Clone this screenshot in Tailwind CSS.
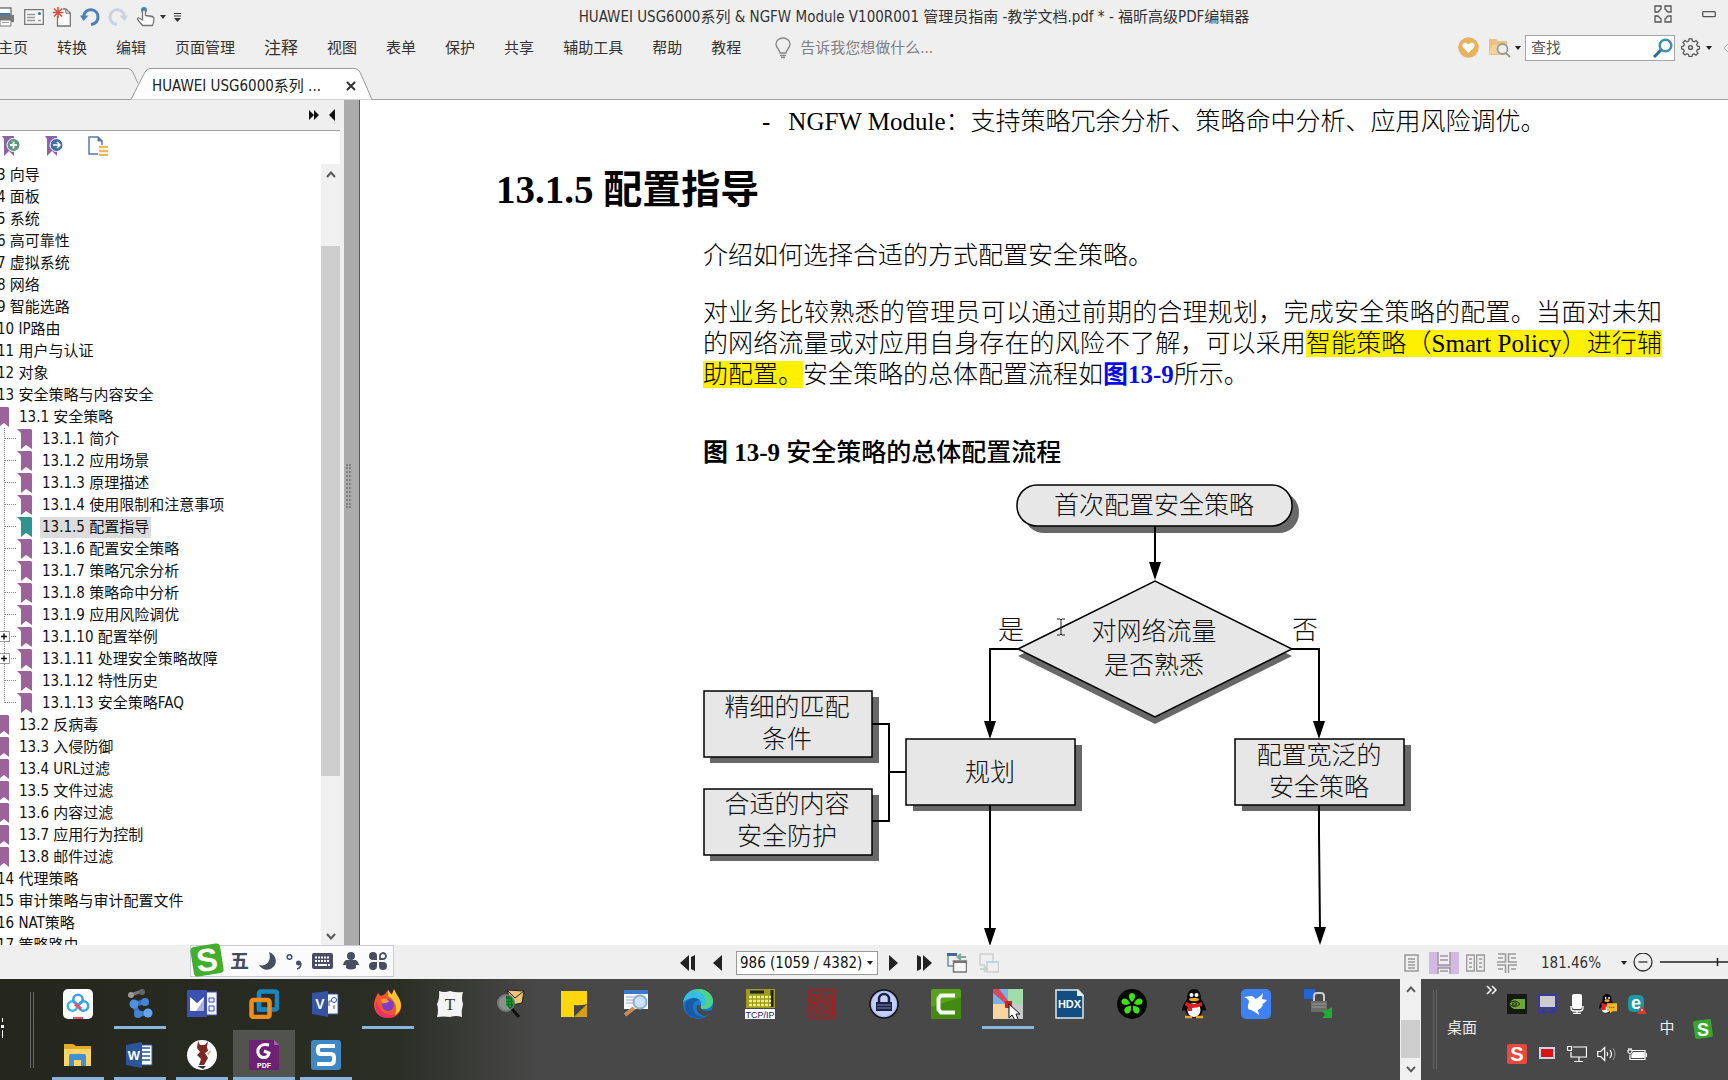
<!DOCTYPE html>
<html lang="zh-CN">
  <head>
    <meta charset="UTF-8" />
    <meta name="viewport" content="width=device-width, initial-scale=1.0" />
    <title>福昕高级PDF编辑器</title>
    <script src="https://cdn.jsdelivr.net/npm/@tailwindcss/browser@4"></script>
  </head>
  <body class="h-screen overflow-hidden flex flex-col bg-[#efefef] text-[15px] leading-[22px] text-[#333] font-['DejaVu_Sans_Condensed','Noto_Sans_CJK_SC',sans-serif]">
    <!-- title bar -->
    <header class="shrink-0">
      <div class="h-[34px] flex items-center">
        <div class="w-[180px] flex items-center gap-2">
          <button aria-label="打印" class="w-4"><svg class="w-4 h-5" viewBox="0 0 16 20" fill="none"><path d="M0 1h11v7H0" fill="#fff" stroke="#777" stroke-width="1.4"/><path d="M0 6h10v3H0z" fill="#3f78a8"/><path d="M0 8h14v7H0z" fill="#777"/><path d="M0 13h11v6H0z" fill="#fff" stroke="#777"/><path d="M2 15.500h7" stroke="#999"/></svg></button>
          <button aria-label="邮件"><svg class="w-5 h-5" viewBox="0 0 20 20" fill="none" stroke="#777" stroke-width="1.300"><path d="M.7 2.700h18.600v14.600H.7z" fill="#f7f7f7"/><path d="M3 7.500h8M3 10.500h8M3 13.500h8M14 13.500h3" stroke="#999"/><circle cx="15.500" cy="6.500" r="1.500" fill="#3f6fa8" stroke="none"/></svg></button>
          <button aria-label="新建"><svg class="w-5 h-5" viewBox="0 0 20 20" fill="none"><path d="M5.500 9v10h12.800V6l-4.500-4h-3" fill="#fafafa" stroke="#777" stroke-width="1.300"/><path d="M13.800 2v4.200h4.500" stroke="#777"/><path d="M6 0v11M.8 5.500h10.500M2 1.500l8 8M10 1.500l-8 8" stroke="#d8503c" stroke-width="1.500"/></svg></button>
          <button aria-label="撤销"><svg class="w-5 h-5" viewBox="0 0 20 20" fill="none"><path d="M3.500 10C4 4.500 8 2.300 11.500 2.700c4 .5 6.500 3.500 6.500 7.300 0 4-2.800 6.800-7 7.500" stroke="#4a82b6" stroke-width="3"/><path d="M0 8.500h8.500L3.500 14z" fill="#4a82b6"/></svg></button>
          <button aria-label="重做"><svg class="w-5 h-5" viewBox="0 0 20 20" fill="none"><path d="M16.500 10C16 4.500 12 2.300 8.500 2.700 4.500 3.200 2 6.200 2 10c0 4 2.800 6.800 7 7.500" stroke="#c9d3df" stroke-width="3"/><path d="M20 8.500h-8.500l5 5.500z" fill="#c9d3df"/></svg></button>
          <button aria-label="手型工具" class="flex items-center gap-1"><svg class="w-5 h-5" viewBox="0 0 20 20" fill="none"><circle cx="8" cy="3" r="3" fill="#4a7fb0"/><path d="M6.500 4v9L3 11c-1.500-.5-2 1-1 2l4.500 5.500h10c1.500-2.500 1.500-5 1.300-7.500-.1-1.500-1.300-1.700-8.300-2.500V4c0-1.500-3-1.500-3 0z" fill="#fafafa" stroke="#777" stroke-width="1.300"/></svg><svg class="w-[6px] h-2" viewBox="0 0 6 8"><path d="M0 2h6L3 6z" fill="#333"/></svg></button>
          <button aria-label="自定义"><svg class="w-[7px] h-3" viewBox="0 0 7 12"><path d="M0 2.500h7M0 5h7" stroke="#333"/><path d="M0 7h7l-3.500 4z" fill="#333"/></svg></button>
        </div>
        <h1 class="flex-1 text-center whitespace-nowrap">HUAWEI USG6000系列 &amp; NGFW Module V100R001 管理员指南 -教学文档.pdf * - 福昕高级PDF编辑器</h1>
        <div class="w-[80px] flex items-center gap-[30px] pl-[6px] pb-[6px]">
          <button aria-label="全屏"><svg class="w-[18px] h-[18px]" viewBox="0 0 18 18" fill="none" stroke="#555" stroke-width="1.300"><path d="M1 1h6v3L4 7H1zM11 1h6v6h-3l-3-3zM1 11h3l3 3v3H1zM14 11h3v6h-6v-3z"/></svg></button>
          <button aria-label="最小化"><svg class="w-[14px] h-[18px]" viewBox="0 0 14 18"><rect x=".7" y="6.700" width="12.600" height="5" rx="1" fill="none" stroke="#555" stroke-width="1.300"/></svg></button>
        </div>
      </div>

      <!-- menu -->
      <div class="h-[34px] flex items-center pb-[7px]">
        <nav class="flex items-center gap-[29px] -ml-[2px] whitespace-nowrap">
          <a href="#">主页</a>
          <a href="#">转换</a>
          <a href="#">编辑</a>
          <a href="#">页面管理</a>
          <a href="#" class="text-[17px]">注释</a>
          <a href="#">视图</a>
          <a href="#">表单</a>
          <a href="#">保护</a>
          <a href="#">共享</a>
          <a href="#">辅助工具</a>
          <a href="#">帮助</a>
          <a href="#">教程</a>
        </nav>
        <label class="ml-[34px] flex items-center gap-[9px]">
          <svg class="w-4 h-[22px]" viewBox="0 0 16 22" fill="none" stroke="#888" stroke-width="1.400"><path d="M5 16c0-3-4-5-4-9a7 6 0 0 1 14 0c0 4-4 6-4 9zM5 18.500h6M6 20.500h4"/></svg>
          <input type="text" placeholder="告诉我您想做什么..." class="w-[180px] bg-transparent outline-none placeholder:text-[#808080]" />
        </label>
        <div class="ml-auto flex items-center shrink-0">
          <button aria-label="收藏" class="mr-[10px]"><svg class="w-[21px] h-[21px]" viewBox="0 0 21 21"><circle cx="10.500" cy="10.500" r="10.300" fill="#e6b160"/><path d="M10.500 16L5 10.500C3 7.500 6.500 3.500 10.500 7.500 14.500 3.500 18 7.500 16 10.500z" fill="#fff"/></svg></button>
          <button aria-label="搜索文件夹" class="mr-[4px] flex items-center gap-[4px]"><svg class="w-[22px] h-[21px]" viewBox="0 0 22 21"><path d="M0 2h7l2 2h9v14H0z" fill="#ecc083"/><path d="M3 8h15l-2 9H0z" fill="#f3d2a0"/><circle cx="13.500" cy="12" r="5" fill="#eee" stroke="#999" stroke-width="1.800"/><path d="M17 16l4 4" stroke="#999" stroke-width="2"/></svg><svg class="w-[6px] h-2" viewBox="0 0 6 8"><path d="M0 2h6L3 6z" fill="#222"/></svg></button>
          <label class="w-[150px] h-[26px] bg-white border border-[#a5a5a5] flex items-center pl-[5px] pr-[1px]">
            <input type="text" placeholder="查找" aria-label="查找" class="flex-1 min-w-0 outline-none placeholder:text-[#555]" />
            <svg class="w-5 h-5" viewBox="0 0 20 20" fill="none"><path d="M1 19l7-7" stroke="#31678e" stroke-width="3"/><circle cx="12.500" cy="7.500" r="5.800" stroke="#3f8fb0" stroke-width="2.500"/></svg>
          </label>
          <button aria-label="设置" class="ml-[6px] flex items-center gap-[6px]"><svg class="w-[19px] h-[19px]" viewBox="0 0 20 20" fill="none" stroke="#555"><path stroke-width="1.300" d="M8.500 1h3l.5 2.300 1.800.8 2-1.400 2 2-1.300 2 .8 1.900 2.200.4v2.500l-2.200.7-.8 1.800 1.400 2-2.100 2-2-1.300-1.800.7-.5 2.300h-3L8 17.300l-1.800-.8-2 1.300-2.100-2 1.400-2-.8-1.900L.5 11.500V9l2.300-.6.7-1.800-1.300-2 2-2 2 1.300L8 3.200z"/><circle cx="10" cy="10" r="2" stroke-width="1.500"/></svg><svg class="w-[6px] h-2" viewBox="0 0 6 8"><path d="M0 2h6L3 6z" fill="#222"/></svg></button>
          <svg class="w-[4px] h-3 ml-3" viewBox="0 0 4 12" fill="none"><path d="M4 2L0 6l4 4" stroke="#bbb"/></svg>
        </div>
      </div>

      <!-- document tabs -->
      <div class="h-8 relative border-b border-[#a0a0a0]">
        <svg class="absolute left-0 top-0 w-[376px] h-8" viewBox="0 0 376 32" stroke="#999"><path d="M-2.500.5H128q3 0 5 4l5 11" fill="none"/><path d="M131 31.500L145 4q2-3.500 5-3.500h205q3 0 5 3.500l12 27.500" fill="#fff"/></svg>
        <div class="relative flex items-center h-8 pt-1 pl-[152px]">
          <span class="w-[193px] text-[#222] whitespace-nowrap">HUAWEI USG6000系列 ...</span>
          <button aria-label="关闭标签"><svg class="w-3 h-3" viewBox="0 0 12 12"><path d="M2 2l8 8M10 2l-8 8" stroke="#333" stroke-width="2"/></svg></button>
        </div>
      </div>
    </header>

    <main class="flex-1 min-h-0 flex">
      <!-- bookmarks panel -->
      <aside class="w-[344px] shrink-0 flex flex-col pr-1">
        <div class="h-[31px] shrink-0 border-b border-[#a0a0a0] flex items-center justify-end gap-[10px] pr-[5px]">
          <button aria-label="展开"><svg class="w-[10px] h-[10px]" viewBox="0 0 10 10"><path d="M0 0l5 5-5 5zM5 0l5 5-5 5z" fill="#111"/></svg></button>
          <button aria-label="收起"><svg class="w-[6px] h-3" viewBox="0 0 6 12"><path d="M6 0v12L0 6z" fill="#111"/></svg></button>
        </div>
        <div class="h-[33px] shrink-0 bg-white flex items-center pl-[2px] gap-[25px] pb-1">
          <button aria-label="添加书签"><svg class="w-[18px] h-5" viewBox="0 0 18 20"><path d="M0 0h12v20l-5-5-5 5V3z" fill="#8f62a8"/><circle cx="11.500" cy="9" r="6.500" fill="#5f9780" stroke="#fff"/><path d="M11.500 5.500v7M8 9h7" stroke="#fff" stroke-width="1.800"/></svg></button>
          <button aria-label="转到书签"><svg class="w-[18px] h-5" viewBox="0 0 18 20"><path d="M0 0h12v20l-5-5-5 5V3z" fill="#8f62a8"/><circle cx="11.500" cy="9" r="6.500" fill="#4470a8" stroke="#fff"/><path d="M8 9h7M12 6l3 3-3 3" fill="none" stroke="#fff" stroke-width="1.500"/></svg></button>
          <button aria-label="书签选项"><svg class="w-5 h-5" viewBox="0 0 20 20" fill="none"><path d="M1 1h9l4 4v13H1z" fill="#fff" stroke="#5578a8" stroke-width="1.500"/><path d="M10 1v4h4" fill="#5578a8" stroke="#5578a8"/><path d="M10 9h10v11H10z" fill="#fff"/><path d="M11 11h9M11 15h9M11 19h9" stroke="#efb75c" stroke-width="2.500"/></svg></button>
        </div>
        <div class="flex-1 min-h-0 flex bg-white">
          <ul id="bookmarks" class="flex-1 min-w-0 overflow-hidden text-[#111] whitespace-nowrap"></ul>
          <div class="w-[19px] bg-[#f0f0f0] flex flex-col items-center justify-between">
            <svg class="w-[10px] h-[22px]" viewBox="0 0 10 22"><path d="M1 13l4-4.500L9 13" fill="none" stroke="#555" stroke-width="2"/></svg>
            <div class="w-full grow-530 basis-0 mt-[60px] mb-[147px] bg-[#cdcdcd]"></div>
            <svg class="w-[10px] h-[22px]" viewBox="0 0 10 22"><path d="M1 11l4 4.500L9 11" fill="none" stroke="#555" stroke-width="2"/></svg>
          </div>
        </div>
      </aside>
      <div class="w-4 shrink-0 bg-[#ababab] border-r border-[#555] pl-[2px]">
        <div class="mt-[364px] w-[5px] h-[44px] border-x-2 border-dotted border-[#808080]"></div>
      </div>

      <!-- page -->
      <article class="flex-1 min-w-0 overflow-hidden bg-white text-black text-[25px] leading-[31px] pl-[136px] font-['Liberation_Serif','Noto_Sans_CJK_SC',serif]">
        <p class="pl-[266px] pt-[6px] font-light flex gap-[18px] whitespace-nowrap"><span>-</span><span>NGFW Module：支持策略冗余分析、策略命中分析、应用风险调优。</span></p>
        <h2 class="mt-[28px] text-[39px] leading-[50px] font-bold">13.1.5 配置指导</h2>
        <div class="pl-[207px] mr-4">
          <p class="mt-[25px] font-light">介绍如何选择合适的方式配置安全策略。</p>
          <p class="mt-[26px] max-w-[959px] text-justify font-light">对业务比较熟悉的管理员可以通过前期的合理规划，完成安全策略的配置。当面对未知的网络流量或对应用自身存在的风险不了解，可以采用<mark class="bg-[#fff000]">智能策略（Smart Policy）进行辅助配置。</mark>安全策略的总体配置流程如<a href="#fig-13-9" class="text-[#0808e8] font-bold">图13-9</a>所示。</p>
          <h3 id="fig-13-9" class="mt-[47px] font-medium"><b>图 13-9</b> 安全策略的总体配置流程</h3>
        </div>
        <!-- configuration flow chart -->
        <svg class="ml-[204px] mt-[11px] w-[720px] h-[467px]" viewBox="0 0 720 467" text-anchor="middle">
          <g fill="#686868">
            <rect x="324" y="13" width="275" height="41" rx="20" />
            <path d="M318 177l137-68 137 68-137 68z" />
            <rect x="213" y="266" width="169" height="66" />
            <rect x="542" y="266" width="169" height="66" />
            <rect x="10" y="218" width="169" height="66" />
            <rect x="10" y="316" width="169" height="66" />
          </g>
          <g fill="none" stroke="#000" stroke-width="2">
            <path d="M455 46v40M318 170h-28v76M592 170h27v76M290 325v126M619 325v30l1 96" />
            <path d="M172 245h17v97h-17M189 293h17" />
          </g>
          <path d="M449 83h12l-6 18zM284 242h12l-6 18zM613 242h12l-6 18zM284 449h12l-6 18zM614 448h12l-6 18z" />
          <g fill="#e7e7e7" stroke="#000" stroke-width="1.500">
            <rect x="317" y="6" width="275" height="41" rx="20" />
            <path d="M318 170l137-68 137 68-137 68z" />
            <rect x="206" y="260" width="169" height="66" />
            <rect x="535" y="260" width="169" height="66" />
            <rect x="4" y="212" width="168" height="66" />
            <rect x="4" y="310" width="168" height="66" />
          </g>
          <g class="font-light" fill="#111">
            <text x="454" y="35">首次配置安全策略</text>
            <text x="454" y="161">对网络流量</text>
            <text x="454" y="195">是否熟悉</text>
            <text x="311" y="160" font-size="26">是</text>
            <text x="605" y="160" font-size="26">否</text>
            <text x="87" y="237">精细的匹配</text>
            <text x="87" y="269">条件</text>
            <text x="87" y="334">合适的内容</text>
            <text x="87" y="366">安全防护</text>
            <text x="290" y="302">规划</text>
            <text x="619" y="285">配置宽泛的</text>
            <text x="619" y="317">安全策略</text>
          </g>
          <path d="M357 140h3l1 1 1-1h3M357 156h3l1-1 1 1h3M361 141v14" fill="none" stroke="#222" />
        </svg>
      </article>
    </main>

    <!-- status bar -->
    <footer class="h-[34px] shrink-0 relative flex items-center">
      <div class="absolute left-[190px] top-0 h-8 w-[204px] flex items-center gap-[10px] pl-[39px] bg-[#fbfbfd] border border-[#c9cbdc] text-[#454860]">
        <svg class="absolute -left-[2px] -top-[4px] w-9 h-9" viewBox="0 0 36 36"><rect x="3" y="3" width="30" height="30" rx="4" fill="#43ae2c" transform="rotate(-9 18 18)"/><text x="18" y="29" text-anchor="middle" font-family="Liberation Sans" font-weight="700" font-size="32" fill="#fff" transform="rotate(-6 18 18)">S</text></svg>
        <span class="text-[19px] font-bold">五</span>
        <svg class="w-[17px] h-[18px]" viewBox="0 0 17 18"><path d="M10 0c8 3 9 12 3 16-4 3-10 2-13-3 7 2 13-4 10-13z" fill="#4a4d60"/></svg>
        <svg class="w-4 h-[18px]" viewBox="0 0 16 18"><circle cx="3.500" cy="5" r="2.300" fill="none" stroke="#4a4d60" stroke-width="1.500"/><circle cx="12.500" cy="11" r="2.500" fill="#4a4d60"/><path d="M15 11q0 5-4 6" fill="none" stroke="#4a4d60" stroke-width="1.500"/></svg>
        <svg class="w-[21px] h-[16px]" viewBox="0 0 21 16"><rect width="21" height="16" rx="2" fill="#4a4d60"/><path d="M3 4.500h15M3 8h15" stroke="#fff" stroke-width="2" stroke-dasharray="2 1"/><path d="M3 12h2M6 12h9M16 12h2" stroke="#fff" stroke-width="2"/></svg>
        <svg class="w-[16px] h-[18px]" viewBox="0 0 16 18" fill="#4a4d60"><circle cx="8" cy="4" r="4"/><path d="M3 8h10q3 2 3 5h-3v3q-5 3-10 0v-3H0q0-3 3-5z"/></svg>
        <svg class="w-[18px] h-[18px]" viewBox="0 0 18 18" fill="#4a4d60"><path d="M8 8H4a4 4 0 1 1 4-4zM8 10v4a4 4 0 1 1-4-4zM10 10h4a4 4 0 1 1-4 4z"/><path d="M11 7V4.500a3 3 0 1 1 3 2.500z" fill="none" stroke="#4a4d60" stroke-width="1.800"/></svg>
      </div>
      <div class="flex items-center ml-[680px] pt-px text-[#111] shrink-0">
        <button aria-label="第一页"><svg class="w-[15px] h-4" viewBox="0 0 15 16"><path d="M9 0v16L0 8zM15 0v16l-4-2V2z" fill="#222"/></svg></button>
        <button aria-label="上一页" class="ml-[18px]"><svg class="w-[9px] h-4" viewBox="0 0 9 16"><path d="M9 0v16L0 8z" fill="#222"/></svg></button>
        <div class="relative ml-[14px]">
          <select aria-label="页码" class="appearance-none block w-[142px] h-6 bg-white border border-[#999] pl-[3px] text-[15px] leading-[22px]">
            <option>986 (1059 / 4382)</option>
          </select>
          <svg class="absolute right-[5px] top-2 w-[6px] h-2 pointer-events-none" viewBox="0 0 6 8"><path d="M0 2h6L3 6z" fill="#222"/></svg>
        </div>
        <button aria-label="下一页" class="ml-[11px]"><svg class="w-[9px] h-4" viewBox="0 0 9 16"><path d="M0 0v16l9-8z" fill="#222"/></svg></button>
        <button aria-label="最后一页" class="ml-[19px]"><svg class="w-[15px] h-4" viewBox="0 0 15 16"><path d="M6 0v16l9-8zM0 0v16l4-2V2z" fill="#222"/></svg></button>
        <button aria-label="上一视图" class="ml-[15px]"><svg class="w-5 h-5" viewBox="0 0 20 20" fill="none" stroke-width="1.500"><path d="M9 1H1v12h5" stroke="#7790a5"/><path d="M0 1.500h10" stroke="#3e6b94" stroke-width="3"/><path d="M6.500 8h13v11h-13z" stroke="#777" fill="#f8f8f8"/><path d="M6 9h14" stroke="#777" stroke-width="2"/><path d="M19 4h-7M14 1l-3.500 3L14 7" stroke="#7fa89a" stroke-width="2"/></svg></button>
        <button aria-label="下一视图" class="ml-[12px]"><svg class="w-5 h-5" viewBox="0 0 20 20" fill="none" stroke="#cfcfcf" stroke-width="1.500"><path d="M1 1h13v7M1 1v11h5M8 9h11.500v10H8z"/><path d="M7 9h13" stroke="#bcd6dd" stroke-width="2"/><path d="M1 16h7M5 13l3 3-3 3" stroke="#bcd6d0" stroke-width="2"/></svg></button>
      </div>
      <div class="ml-auto flex items-center pt-px shrink-0 text-[#333]">
        <button aria-label="单页" class="mr-[10px]"><svg class="w-[15px] h-[18px]" viewBox="0 0 15 18" fill="none" stroke="#999" stroke-width="1.500"><path d="M1 1h13v16H1zM4 5h7M4 8h7M4 11h7M4 14h7"/></svg></button>
        <button aria-label="连续" class="w-[30px] h-[22px] bg-[#d3b8e4] flex justify-center items-center"><svg class="w-4 h-[22px]" viewBox="0 0 16 22" stroke="#999" stroke-width="1.500"><path d="M2 0v13h12V0M2 22v-6h12v6" fill="#f3ecf7"/><path d="M4 4h8M4 8h8M4 19h8"/></svg></button>
        <button aria-label="双页" class="ml-[7px]"><svg class="w-[19px] h-[18px]" viewBox="0 0 19 18" fill="none" stroke="#999" stroke-width="1.300"><path d="M.7 1h7.600v16H.7zM10.700 1h7.600v16h-7.600zM3 5h3M3 9h3M3 13h3M13 5h3M13 9h3M13 13h3"/></svg></button>
        <button aria-label="双页连续" class="ml-[12px]"><svg class="w-5 h-5" viewBox="0 0 20 20" fill="none" stroke="#999" stroke-width="1.500"><path d="M1 1h7.500v8H0M19 1h-7.500v8H20M0 12h8.500v8M20 12h-8.500v8M1 5h5M14 5h5M1 16h5M14 16h5"/></svg></button>
        <span class="ml-[24px] w-[80px]">181.46%</span>
        <svg class="w-[6px] h-2" viewBox="0 0 6 8"><path d="M0 2h6L3 6z" fill="#222"/></svg>
        <button aria-label="缩小" class="ml-[6px]"><svg class="w-5 h-5" viewBox="0 0 20 20" fill="none" stroke="#333" stroke-width="1.300"><circle cx="10" cy="9" r="9"/><path d="M5.500 9h9"/></svg></button>
        <svg class="w-[68px] h-3 ml-[7px]" viewBox="0 0 68 12"><path d="M0 5h68M57.500 1v8" stroke="#222" stroke-width="1.500"/></svg>
      </div>
    </footer>

    <!-- windows taskbar -->
    <div class="h-[101px] shrink-0 flex bg-[#484848] bg-linear-to-r from-[#25271f] from-[2%] via-[#2b2e25] via-[23%] to-[#484848] to-[31%] text-[#eee]">
      <div class="w-[47px] shrink-0 relative">
        <svg class="w-[47px] h-[101px]" viewBox="0 0 47 101"><path d="M2.500 39v4M2.500 51v8" stroke="#fff"/><path d="M1 46h3v3H1z" fill="#fff"/><path d="M30.500 13v76M33.500 13v76" stroke="#666"/></svg>
      </div>
      <div class="flex-1 min-w-0 grid grid-cols-[repeat(21,62px)] grid-rows-[51px_50px]">
        <button aria-label="百度网盘" class="flex justify-center pt-[10px]"><svg class="w-[30px] h-[30px]" viewBox="0 0 30 30" fill="none"><rect width="30" height="30" rx="5" fill="#fff"/><circle cx="9.500" cy="17" r="4.700" stroke="#3fb6e8" stroke-width="2.600"/><circle cx="20.500" cy="17" r="4.700" stroke="#35a6e6" stroke-width="2.600"/><circle cx="15" cy="10.500" r="4.700" stroke="#3f9fe8" stroke-width="2.600"/><path d="M12 15l6 5" stroke="#e8506a" stroke-width="3"/><path d="M10 29h10" stroke="#e8506a" stroke-width="2"/></svg></button>
        <button aria-label="拓扑" class="flex justify-center pt-[10px] relative after:absolute after:bottom-px after:inset-x-[5px] after:h-[3px] after:bg-[#86b6dd]"><svg class="w-[30px] h-[30px]" viewBox="0 0 30 30"><path d="M6 6l11-4" stroke="#777" stroke-width="3"/><circle cx="6" cy="6" r="3" fill="#999"/><circle cx="17" cy="3" r="3" fill="#666"/><path d="M20 13L9 15l4 10 11-1" fill="none" stroke="#3c74c4" stroke-width="5"/><circle cx="20" cy="13" r="4" fill="#4583d6"/><circle cx="9" cy="15" r="4.500" fill="#4f90e0"/><circle cx="13" cy="25" r="4" fill="#4583d6"/><circle cx="23" cy="24" r="4.500" fill="#66a5ee"/></svg></button>
        <button aria-label="MindMaster" class="flex justify-center pt-[10px]"><svg class="w-[30px] h-[30px]" viewBox="0 0 30 30"><path d="M17 3h13v23H17z" fill="#f2f2fa" stroke="#4150a8"/><path d="M22 9h5v4h-5zM22 17h5v5h-5z" fill="none" stroke="#4150a8"/><path d="M0 1h20v27H0z" fill="#3d50b2"/><path d="M3 8l7 6 7-6v14H3z" fill="#fff"/><path d="M9 22l8-12v12z" fill="#a9b1dc"/></svg></button>
        <button aria-label="VMware" class="flex justify-center pt-[10px]"><svg class="w-[30px] h-[30px]" viewBox="0 0 30 30" fill="none" stroke-width="4.500"><rect x="10" y="2.500" width="18" height="18" rx="2" stroke="#1d87bd"/><rect x="2.500" y="11" width="18" height="17" rx="2" stroke="#ee8d1c"/><path d="M10 13v7.500h7" stroke="#1d87bd"/></svg></button>
        <button aria-label="Visio" class="flex justify-center pt-[10px]"><svg class="w-[30px] h-[30px]" viewBox="0 0 30 30"><path d="M15 5h12v20H15z" fill="#fff" stroke="#3a54a5"/><path d="M18 17v-5h5M23 20v-4" stroke="#3a54a5" fill="none"/><circle cx="23" cy="11" r="2.500" fill="#fff" stroke="#3a54a5"/><path d="M1 4l16-2v26L1 25z" fill="#3552a4"/><text x="9" y="20" text-anchor="middle" font-size="14" font-weight="700" font-family="Liberation Sans" fill="#fff">V</text></svg></button>
        <button aria-label="Firefox" class="flex justify-center pt-[10px] relative after:absolute after:bottom-px after:inset-x-[5px] after:h-[3px] after:bg-[#86b6dd]"><svg class="w-[30px] h-[30px]" viewBox="0 0 30 30"><path d="M3 8l2-4 3 3 4-2 3-4 3 5 3-5 2 5c9 8 6 23-8 23C3 29-2 18 3 8z" fill="#f6562f"/><path d="M15 1l4 5 2-6 3 6c6 8 5 16-2 20 3-8 0-15-7-19z" fill="#ffc52e"/><path d="M3 12c4 12 12 16 20 13-3 3-6 4-8 4C6 29 1 22 3 12z" fill="#e9306a"/><circle cx="15" cy="16" r="6" fill="#7a3fc4"/><path d="M8 11c3-3 7-1 8 2-3 0-3 2-7 1z" fill="#ff9a2a"/></svg></button>
        <button aria-label="Typora" class="flex justify-center pt-[10px]"><svg class="w-[30px] h-[30px]" viewBox="0 0 30 30"><path d="M4 2q5 2 11 0 6 2 13 1-2 6 0 12-2 7-1 13-6-2-12 0-6-1-13 0 2-7 0-13 3-6 2-13z" fill="#f4f4f4"/><text x="15" y="21" text-anchor="middle" font-size="17" font-family="Liberation Serif" fill="#333">T</text></svg></button>
        <button aria-label="搜索邮件" class="flex justify-center pt-[10px]"><svg class="w-[30px] h-[30px]" viewBox="0 0 30 30"><path d="M10 1l17 1-2 12-10 2z" fill="#edc573" stroke="#222"/><path d="M10 1l8 8 9-7" fill="none" stroke="#222"/><circle cx="9" cy="14" r="8" fill="#8d918d" stroke="#777" stroke-width="2"/><path d="M9 7a7 7 0 0 1 4 13l-4-4z" fill="#0b6c24"/><path d="M9 11h7M9 14h7M9 17h6" stroke="#2dcb43" stroke-dasharray="2 1"/><path d="M15 20l7 8" stroke="#111" stroke-width="3"/></svg></button>
        <button aria-label="便笺" class="flex justify-center pt-[10px]"><svg class="w-[30px] h-[30px]" viewBox="0 0 30 30"><path d="M2 2h26v13L16 28H2z" fill="#fdd60c"/><path d="M28 15v13H16z" fill="#d99f12"/><path d="M15 28V16q7 1 13-1z" fill="#444"/></svg></button>
        <button aria-label="查看器" class="flex justify-center pt-[10px]"><svg class="w-[30px] h-[30px]" viewBox="0 0 30 30"><path d="M3 1h24v19H3z" fill="#f4f8fc"/><path d="M3 1h24v4H3z" fill="#3b78c6"/><path d="M5 8h13M5 11h12M5 14h9" stroke="#9ab"/><path d="M13 19l-9 7" stroke="#cc8a58" stroke-width="4"/><circle cx="19" cy="13" r="6.500" fill="#c9e4fa" stroke="#8eaed0" stroke-width="2"/></svg></button>
        <button aria-label="Edge" class="flex justify-center pt-[10px]"><svg class="w-[30px] h-[30px]" viewBox="0 0 30 30"><circle cx="15" cy="15" r="15" fill="#1878ca"/><path d="M0 14C1 5 8 0 15 0c9 0 15 6 15 12 0 5-4 8-9 8-4 0-4-2-3-4 1-5-4-8-9-7-4 1-7 2-9 5z" fill="#35bfe0"/><path d="M15 0c9 0 15 6 15 12 0 5-4 8-9 8-3 0-4-1-4-3 3 1 7-1 6-6-1-6-6-9-14-9z" fill="#4fd287"/><path d="M17 11c-5 0-8 4-7 9 1 5 5 8 11 8-9 4-20-2-19-12C4 9 12 8 17 11z" fill="#1b59a8"/><path d="M18 16c-2 4 3 8 11 5-2 3-4 5-7 6-6-1-10-6-8-11z" fill="#484848"/></svg></button>
        <button aria-label="TCP/IP 工具" class="flex justify-center pt-[10px]"><svg class="w-[30px] h-[30px]" viewBox="0 0 30 30"><path d="M1 0h29v19H1z" fill="#9d9c20"/><path d="M5 3h14M27 1v17" stroke="#222" stroke-width="3"/><path d="M4 8h22M4 12h22M4 16h22" stroke="#eff080" stroke-width="2.500" stroke-dasharray="3 1"/><path d="M0 20h30v10H0z" fill="#fff"/><text x="15" y="29" text-anchor="middle" font-size="9" font-family="Liberation Sans" fill="#16166e">TCP/IP</text></svg></button>
        <button aria-label="印章" class="flex justify-center pt-[10px]"><svg class="w-[30px] h-[30px]" viewBox="0 0 30 30" fill="none" stroke="#bd1418" stroke-width="1.500"><rect x="2" y="1" width="26" height="28" rx="1"/><path d="M5 6v19M5 6h4v19M5 14h4M12.500 4v21M12.500 12h4v13h-4M20 25V7h5v18h-5M22.500 7v18M16 4v6"/></svg></button>
        <button aria-label="KeePass" class="flex justify-center pt-[10px]"><svg class="w-[30px] h-[30px]" viewBox="0 0 30 30"><circle cx="15" cy="15" r="14" fill="#aab9f0" stroke="#111" stroke-width="1.500"/><circle cx="15" cy="15" r="12" fill="#c3cefa"/><path d="M10 14v-4a5 5 0 0 1 10 0v4" fill="none" stroke="#1b2142" stroke-width="2.500"/><path d="M7 13h16v9H7z" fill="#1b2142"/><path d="M8 16h14M8 19h14" stroke="#7a86bd"/></svg></button>
        <button aria-label="Camtasia" class="flex justify-center pt-[10px]"><svg class="w-[30px] h-[30px]" viewBox="0 0 30 30"><rect width="30" height="30" rx="2" fill="#57a319"/><path d="M0 18L30 8v20q0 2-2 2H0z" fill="#438a12"/><path d="M24 6.500H10l-2.500 3v11l2.500 3h14" fill="none" stroke="#f3f8ec" stroke-width="4"/></svg></button>
        <button aria-label="录屏" class="flex justify-center pt-[10px] relative after:absolute after:bottom-px after:inset-x-[5px] after:h-[3px] after:bg-[#86b6dd]"><svg class="w-[30px] h-[30px]" viewBox="0 0 30 30"><path d="M0 0h15v15H0z" fill="#7db1e6"/><path d="M15 0h15v15H15z" fill="#9fdda9"/><path d="M0 15h15v15H0z" fill="#f8d49e"/><path d="M15 15h15v15H15z" fill="#c9c9c9"/><path d="M0 0h6l10 13-3 2L0 4z" fill="#d9495a"/><path d="M12 12h7v7h-7z" fill="#d02020"/><path d="M16 15v14l3-3 3 5 3-1-2-5h4z" fill="#fff" stroke="#111"/></svg></button>
        <button aria-label="HDX" class="flex justify-center pt-[10px]"><svg class="w-[30px] h-[30px]" viewBox="0 0 30 30"><path d="M1 1h22l5 5v23H1z" fill="#124d80" stroke="#d9e6ef" stroke-width="1.500"/><path d="M22 0v7h7z" fill="#e9f0f5"/><text x="14.500" y="19" text-anchor="middle" font-size="11" font-weight="700" font-family="Liberation Sans" fill="#fff">HDX</text></svg></button>
        <button aria-label="ICQ" class="flex justify-center pt-[10px]"><svg class="w-[30px] h-[30px]" viewBox="0 0 30 30"><circle cx="15" cy="15" r="15" fill="#050805"/><g fill="#3fe312"><path id="petal" d="M15 13c-6-6-2-9 0-9s6 3 0 9z"/><use href="#petal" transform="rotate(72 15 15)"/><use href="#petal" transform="rotate(144 15 15)"/><use href="#petal" transform="rotate(216 15 15)"/><use href="#petal" transform="rotate(288 15 15)"/></g></svg></button>
        <button aria-label="QQ" class="flex justify-center pt-[10px]"><svg class="w-[30px] h-[30px]" viewBox="0 0 30 30"><path id="qq-body" d="M8 10C8 3 11 0 15 0s7 3 7 10c3 4 5 8 5 12l-3-1c-1 5-4 8-9 8s-8-3-9-8l-3 1c0-4 2-8 5-12z" fill="#0b0b0b"/><ellipse cx="15" cy="21" rx="6.500" ry="7" fill="#fff"/><circle cx="12.500" cy="6" r="2" fill="#fff"/><circle cx="17.500" cy="6" r="2" fill="#fff"/><ellipse cx="15" cy="10.500" rx="5" ry="1.800" fill="#f0a51c"/><path d="M7 13q8 4 16 0v4q-5 2-10 2v3H9v-4l-3-2z" fill="#e02020"/><path d="M6 28h7M17 28h7" stroke="#f0a51c" stroke-width="2.500"/></svg></button>
        <button aria-label="蜂鸟" class="flex justify-center pt-[10px]"><svg class="w-[30px] h-[30px]" viewBox="0 0 30 30"><rect width="30" height="30" rx="5" fill="#3f82f4"/><path d="M3 8l7-1q3 0 4 3 4-1 8-6l-1 6 5 1q-2 3-5 4l1 1q-2 4-5 5l1 5q-5-4-8-5-4 0-3-5l1-3q0-3-5-5z" fill="#fff"/></svg></button>
        <button aria-label="安全连接" class="flex justify-center pt-[10px]"><svg class="w-[30px] h-[30px]" viewBox="0 0 30 30"><path d="M1 0h11v10H1z" fill="#2063dd"/><path d="M11 13V7q0-3 3-3h4q3 0 3 3v6" fill="none" stroke="#ccc" stroke-width="2"/><path d="M8 12h16v11H8z" fill="#6c6c6c"/><path d="M9 15h14M9 18h14" stroke="#999"/><path d="M18 20l4 2 7-4v11H19l3-3z" fill="#1fae32"/></svg></button>

        <button aria-label="文件资源管理器" class="flex justify-center pt-[10px] relative after:absolute after:bottom-0 after:inset-x-[5px] after:h-[3px] after:bg-[#86b6dd]"><svg class="w-[30px] h-[30px]" viewBox="0 0 30 30"><path d="M1 4h9l3 2h15v20H1z" fill="#e5a928"/><path d="M1 9h27v17H1z" fill="#fbd567"/><path d="M6 26V16q0-2 2-2h13q2 0 2 2v10h-5v-6h-7v6z" fill="#438fd0"/></svg></button>
        <button aria-label="Word" class="flex justify-center pt-[10px] relative after:absolute after:bottom-0 after:inset-x-[5px] after:h-[3px] after:bg-[#86b6dd]"><svg class="w-[30px] h-[30px]" viewBox="0 0 30 30"><path d="M15 5h12v20H15z" fill="#fff" stroke="#2b579a"/><path d="M17 8h8M17 12h8M17 16h8M17 20h8" stroke="#2b579a" stroke-width="1.500"/><path d="M1 5l16-3v26L1 25z" fill="#2b579a"/><text x="9" y="20" text-anchor="middle" font-size="13" font-weight="700" font-family="Liberation Sans" fill="#fff">W</text></svg></button>
        <button aria-label="红魔" class="flex justify-center pt-[10px] relative after:absolute after:bottom-0 after:inset-x-[5px] after:h-[3px] after:bg-[#86b6dd]"><svg class="w-[30px] h-[30px]" viewBox="0 0 30 30"><circle cx="15" cy="15" r="15" fill="#fff"/><path d="M11 1l2 4h5l3-4-1 6 1 4-3 2 3 5-4 7h-5l2-6-4-4 3-3-3-4z" fill="#7d2822"/><path d="M20 13l5-3-4 6z" fill="#d9b48c"/><path d="M10 26h9l-3 3z" fill="#333"/></svg></button>
        <button aria-label="福昕PDF" class="flex justify-center pt-[10px] bg-[#52534d] relative after:absolute after:bottom-0 after:inset-x-0 after:h-[3px] after:bg-[#86b6dd]"><svg class="w-[30px] h-[30px]" viewBox="0 0 30 30"><path d="M0 0h25l5 5v25H0z" fill="#6d2173"/><path d="M25 0v5h5z" fill="#a368a8"/><path d="M20 5C12 3 8 8 9 13c2 6 10 6 11 0l-5-2" fill="none" stroke="#fff" stroke-width="3"/><text x="15" y="28" text-anchor="middle" font-size="7" font-weight="700" font-family="Liberation Sans" fill="#fff">PDF</text></svg></button>
        <button aria-label="Snagit" class="flex justify-center pt-[10px] relative after:absolute after:bottom-0 after:inset-x-[5px] after:h-[3px] after:bg-[#86b6dd]"><svg class="w-[30px] h-[30px]" viewBox="0 0 30 30"><rect width="30" height="30" rx="3" fill="#3e88c4"/><path d="M24 6H10Q7 6 7 9v2q0 3 3 3h9q4 0 4 3v3q0 4-4 4H6" fill="none" stroke="#fff" stroke-width="4"/></svg></button>
      </div>

      <div class="w-[328px] shrink-0 flex">
        <div class="w-[21px] bg-[#f0f0f0] flex flex-col items-center justify-between">
          <svg class="w-[10px] h-[22px]" viewBox="0 0 10 22"><path d="M1 13l4-4.500L9 13" fill="none" stroke="#555" stroke-width="2"/></svg>
          <div class="w-[19px] h-[39px] mt-[19px] mb-auto bg-[#cdcdcd]"></div>
          <svg class="w-[10px] h-[22px]" viewBox="0 0 10 22"><path d="M1 9l4 4.500L9 9" fill="none" stroke="#555" stroke-width="2"/></svg>
        </div>
        <div class="ml-3 my-[11px] w-[4px] border-x border-[#666]"></div>
        <button class="ml-[10px] w-[30px] pb-[3px] whitespace-nowrap">桌面</button>
        <button aria-label="更多" class="ml-[8px] self-start mt-[6px]"><svg class="w-3 h-[10px]" viewBox="0 0 12 10"><path d="M2 1l4 4-4 4M7 1l4 4-4 4" fill="none" stroke="#fff" stroke-width="1.500"/></svg></button>
        <div class="ml-[5px] grid grid-cols-[repeat(5,30px)] grid-rows-[50px_50px] place-items-center">
          <svg class="w-5 h-5" viewBox="0 0 20 20"><path d="M0 0h20v20H0z" fill="#15190f"/><path d="M7 5h11v10H7q-3-1-5-5 2-4 5-5z" fill="#71a834"/><path d="M2 10q5-6 11 0-5 5-11 0zM5 10q3-3 5 0-3 3-5 0z" fill="none" stroke="#1b2410"/></svg>
          <svg class="w-5 h-5" viewBox="0 0 20 20"><path d="M2 1h17v13H2z" fill="#ccc" stroke="#383a9c" stroke-width="2"/><path d="M1 18h6l2-2M11 18h6l2-2" stroke="#383a9c" stroke-width="3"/></svg>
          <svg class="w-5 h-5" viewBox="0 0 20 20"><rect x="5" y="0" width="10" height="15" rx="2" fill="#fff"/><path d="M4 12v2q0 3 3 3h6q3 0 3-3v-2M10 17v3M6 19.500h8" fill="none" stroke="#fff" stroke-width="1.300"/></svg>
          <svg class="w-5 h-5" viewBox="0 0 30 30"><use href="#qq-body"/><ellipse cx="13" cy="22" rx="6" ry="6" fill="#fff"/><path d="M7 13q8 4 16 0v4q-5 2-10 2v5H7z" fill="#e02020"/><path d="M12 6h2M17 6h2" stroke="#fff" stroke-width="3"/><ellipse cx="15" cy="10" rx="4" ry="2" fill="#f0a51c"/><path d="M15 14h15v12h-6l-5 3v-3h-4z" fill="#f4b828"/><path d="M18 20h9" stroke="#a06a00" stroke-width="2" stroke-dasharray="2 1"/></svg>
          <svg class="w-5 h-5" viewBox="0 0 20 20"><rect x="1" y="1" width="16" height="17" rx="5" fill="#1a99a5"/><text x="9" y="15" text-anchor="middle" font-size="18" font-weight="700" font-family="Liberation Sans" fill="#fff">e</text><path d="M15 12l5 8H10z" fill="#d83a34"/><path d="M15 15v2" stroke="#fff"/></svg>
          <svg class="w-5 h-5" viewBox="0 0 20 20"><rect width="20" height="20" rx="2" fill="#e8483d"/><text x="10" y="17" text-anchor="middle" font-size="20" font-weight="700" font-family="Liberation Sans" fill="#fff">S</text></svg>
          <svg class="w-5 h-5" viewBox="0 0 20 20"><path d="M3 4h14v10H3z" fill="#e01010" stroke="#ccd6e6" stroke-width="2"/></svg>
          <svg class="w-5 h-5" viewBox="0 0 20 20" fill="none" stroke="#fff" stroke-width="1.200"><path d="M6 3h13.500v10H4V8M12 13v4M7 17.500h9M.5 2.500h4v4h-4z"/></svg>
          <svg class="w-5 h-5" viewBox="0 0 20 20" fill="none" stroke="#fff" stroke-width="1.200"><path d="M.7 7.500h3l4-4v13l-4-4h-3zM10 8q1.500 2 0 4M13 6q3 4 0 8"/><path d="M16 4q4 6 0 12" stroke="#888"/></svg>
          <svg class="w-5 h-5" viewBox="0 0 20 20" fill="none" stroke="#fff" stroke-width="1.200"><path d="M5.500 6.500H18v9H3v-5M1 6h4M1 6v2q2 3 4 0V6M2 4v2M4 4v2M19.500 9v4"/><path d="M7 8.500h10v5H5v-3z" fill="#fff"/></svg>
        </div>
        <button class="ml-[5px] w-[20px] pb-[3px]" aria-label="输入法">中</button>
        <svg class="ml-4 mb-[2px] self-center w-5 h-5" viewBox="0 0 20 20"><rect x="1" y="1" width="18" height="18" rx="2" fill="#35a62c" transform="rotate(-8 10 10)"/><text x="10" y="16.500" text-anchor="middle" font-size="18" font-weight="700" font-family="Liberation Sans" fill="#fff">S</text></svg>
      </div>
    </div>

    <script>
      // [level, title]
      const items = [
        [0, "3 向导"], [0, "4 面板"], [0, "5 系统"], [0, "6 高可靠性"], [0, "7 虚拟系统"],
        [0, "8 网络"], [0, "9 智能选路"], [0, "10 IP路由"], [0, "11 用户与认证"], [0, "12 对象"],
        [0, "13 安全策略与内容安全"], [1, "13.1 安全策略"],
        [2, "13.1.1 简介"], [2, "13.1.2 应用场景"], [2, "13.1.3 原理描述"],
        [2, "13.1.4 使用限制和注意事项"], [2, "13.1.5 配置指导"], [2, "13.1.6 配置安全策略"],
        [2, "13.1.7 策略冗余分析"], [2, "13.1.8 策略命中分析"], [2, "13.1.9 应用风险调优"],
        [2, "13.1.10 配置举例"], [2, "13.1.11 处理安全策略故障"], [2, "13.1.12 特性历史"],
        [2, "13.1.13 安全策略FAQ"],
        [1, "13.2 反病毒"], [1, "13.3 入侵防御"], [1, "13.4 URL过滤"], [1, "13.5 文件过滤"],
        [1, "13.6 内容过滤"], [1, "13.7 应用行为控制"], [1, "13.8 邮件过滤"],
        [0, "14 代理策略"], [0, "15 审计策略与审计配置文件"], [0, "16 NAT策略"], [0, "17 策略路由"],
      ];
      const selected = "13.1.5 配置指导";
      const last = "13.1.13 安全策略FAQ";
      const expandable = ["13.1.10 配置举例", "13.1.11 处理安全策略故障"];

      document.getElementById("bookmarks").innerHTML = items.map(([level, title]) => {
        if (level === 0) {
          return `<li class="h-[22px] -ml-[3px]"><a href="#">${title}</a></li>`;
        }
        if (level === 1) {
          return `<li class="h-[22px] flex items-center">
            <svg class="w-[19px] h-[22px] shrink-0" viewBox="0 0 19 22"><path d="M0 1h8l1 1v19l-5-4-4 3z" fill="#9b629b"/></svg>
            <a href="#">${title}</a></li>`;
        }
        const isSelected = title === selected;
        const plus = expandable.includes(title)
          ? `<path d="M-3.500 5.500h13v10h-13z" fill="#fff" stroke="#999"/><path d="M1 10.500h6M4 7.500v6" stroke="#111" stroke-width="1.500"/>`
          : "";
        return `<li class="h-[22px] flex items-center">
          <svg class="w-10 h-[22px] shrink-0" viewBox="0 0 40 22">
            <path d="M4.500 0v${title === last ? 12 : 22}M5 10.500h12" stroke="#888" stroke-dasharray="1 1"/>${plus}
            <path d="M17 1h14l1 1v19l-6-4-5 4V5z" fill="${isSelected ? "#2f9390" : "#9b629b"}"/>
          </svg>
          <a href="#" class="${isSelected ? "bg-[#dcdcdc] px-[2px] h-[21px] leading-[21px]" : "px-[2px]"}">${title}</a></li>`;
      }).join("");
    </script>
  </body>
</html>
